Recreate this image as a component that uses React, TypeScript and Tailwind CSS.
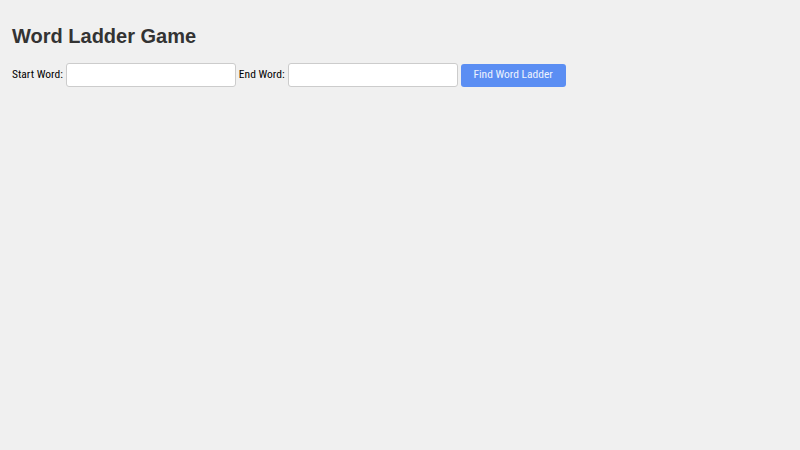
import { useState } from "react";

export default function App() {
  const [start, setStart] = useState("");
  const [end, setEnd] = useState("");

  return (
    <div className="min-h-[450px] w-full bg-[#f0f0f0] px-3 pt-[25px] font-['Liberation_Sans',Arial,sans-serif]">
      <h1 className="text-[20px] font-bold leading-[23px] text-[#333]">Word Ladder Game</h1>

      {/* form row */}
      <div className="mt-[15px] flex items-center text-[11.5px] text-black font-['Roboto',sans-serif] font-stretch-condensed">
        <label htmlFor="start">Start Word:</label>
        <input
          id="start"
          value={start}
          onChange={e => setStart(e.target.value)}
          className="ml-[3px] h-[24px] w-[170px] rounded-[3px] border border-[#ccc] bg-white px-1 outline-none"
        />
        <label htmlFor="end" className="ml-[3px]">End Word:</label>
        <input
          id="end"
          value={end}
          onChange={e => setEnd(e.target.value)}
          className="ml-[3px] h-[24px] w-[170px] rounded-[3px] border border-[#ccc] bg-white px-1 outline-none"
        />
        <button className="ml-[3px] h-[23px] w-[105px] rounded-[3px] bg-[#5b8ef3] text-[#eef3fe]">
          Find Word Ladder
        </button>
      </div>
    </div>
  );
}
